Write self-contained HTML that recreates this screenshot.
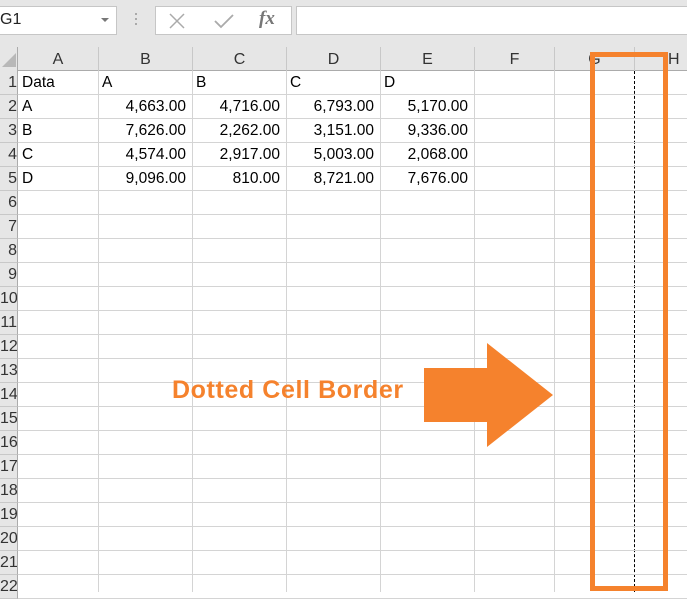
<!DOCTYPE html>
<html><head><meta charset="utf-8"><style>
*{margin:0;padding:0;box-sizing:border-box}
body{width:687px;height:592px;overflow:hidden;background:#fff;font-family:"Liberation Sans",Arial,sans-serif;position:relative}
.tb{position:absolute;left:0;top:0;width:687px;height:47px;background:#e6e6e6}
.box{position:absolute;background:#fff;border:1px solid #c6c6c6}
.hdr{position:absolute;top:47px;height:24px;background:#e6e6e6;border-bottom:1px solid #ababab}
.ch{position:absolute;top:47px;height:24px;font-size:16px;color:#333;text-align:center;line-height:26px;border-right:1px solid #c8c8c8}
.rh{position:absolute;left:0;width:18px;background:#e6e6e6;border-right:1px solid #ababab;font-size:16px;color:#333;text-align:right;line-height:24px;height:24px;overflow:hidden;border-bottom:1px solid #c8c8c8}
.vl{position:absolute;top:71px;height:521px;width:1px;background:#d4d4d4}
.hl{position:absolute;left:18px;width:669px;height:1px;background:#d4d4d4}
.c{position:absolute;font-size:15.5px;color:#000;line-height:24px;height:24px}
.r{text-align:right}
</style></head><body>
<div class="tb"></div>
<div class="box" style="left:-2px;top:6px;width:119px;height:29px"></div>
<div style="position:absolute;left:0;top:11px;font-size:16px;color:#222">G1</div>
<div style="position:absolute;left:101px;top:18px;width:0;height:0;border-left:4px solid transparent;border-right:4px solid transparent;border-top:4px solid #777"></div>
<div style="position:absolute;left:135px;top:13px;width:2px;height:2px;background:#aaa;box-shadow:0 5px 0 #aaa,0 10px 0 #aaa"></div>
<div class="box" style="left:155px;top:6px;width:137px;height:29px"></div>
<svg style="position:absolute;left:168px;top:12px" width="18" height="18"><path d="M2 2L16 16M16 2L2 16" stroke="#aaa" stroke-width="1.5"/></svg>
<svg style="position:absolute;left:213px;top:12px" width="22" height="18"><path d="M2 9L8 15L20 3" stroke="#aaa" stroke-width="1.8" fill="none"/></svg>
<div style="position:absolute;left:259px;top:8px;font-family:'Liberation Serif',serif;font-style:italic;font-weight:bold;font-size:19px;color:#777">fx</div>
<div class="box" style="left:296px;top:6px;width:395px;height:29px"></div>

<div class="hdr" style="left:0;width:687px"></div>
<div style="position:absolute;left:0;top:47px;width:18px;height:24px;background:#e6e6e6;border-right:1px solid #ababab"></div>
<svg style="position:absolute;left:2px;top:53px" width="14" height="14"><path d="M14 0L14 14L0 14Z" fill="#b8b8b8"/></svg>
<div class="ch" style="left:18px;width:81px">A</div>
<div class="ch" style="left:99px;width:94px">B</div>
<div class="ch" style="left:193px;width:94px">C</div>
<div class="ch" style="left:287px;width:94px">D</div>
<div class="ch" style="left:381px;width:94px">E</div>
<div class="ch" style="left:475px;width:80px">F</div>
<div class="ch" style="left:555px;width:80px">G</div>
<div class="ch" style="left:635px;width:80px;text-align:left;padding-left:33px">H</div>

<div class="vl" style="left:98px"></div><div class="vl" style="left:192px"></div><div class="vl" style="left:286px"></div><div class="vl" style="left:380px"></div><div class="vl" style="left:474px"></div><div class="vl" style="left:554px"></div>
<div style="position:absolute;left:634px;top:71px;height:521px;border-left:1px dashed #000"></div>

<div id="rows"></div>
<script>
var h='';for(var i=1;i<=22;i++){var t=71+(i-1)*24;h+='<div class="rh" style="top:'+t+'px">'+i+'</div><div class="hl" style="top:'+(t+23)+'px"></div>';}
document.getElementById('rows').innerHTML=h;
</script>

<div class="c" style="left:22px;top:71px">Data</div>
<div class="c" style="left:102px;top:71px">A</div>
<div class="c" style="left:196px;top:71px">B</div>
<div class="c" style="left:290px;top:71px">C</div>
<div class="c" style="left:384px;top:71px">D</div>
<div class="c" style="left:22px;top:95px">A</div>
<div class="c" style="left:22px;top:119px">B</div>
<div class="c" style="left:22px;top:143px">C</div>
<div class="c" style="left:22px;top:167px">D</div>
<div class="c r" style="left:98px;width:88px;top:95px">4,663.00</div>
<div class="c r" style="left:192px;width:88px;top:95px">4,716.00</div>
<div class="c r" style="left:286px;width:88px;top:95px">6,793.00</div>
<div class="c r" style="left:380px;width:88px;top:95px">5,170.00</div>
<div class="c r" style="left:98px;width:88px;top:119px">7,626.00</div>
<div class="c r" style="left:192px;width:88px;top:119px">2,262.00</div>
<div class="c r" style="left:286px;width:88px;top:119px">3,151.00</div>
<div class="c r" style="left:380px;width:88px;top:119px">9,336.00</div>
<div class="c r" style="left:98px;width:88px;top:143px">4,574.00</div>
<div class="c r" style="left:192px;width:88px;top:143px">2,917.00</div>
<div class="c r" style="left:286px;width:88px;top:143px">5,003.00</div>
<div class="c r" style="left:380px;width:88px;top:143px">2,068.00</div>
<div class="c r" style="left:98px;width:88px;top:167px">9,096.00</div>
<div class="c r" style="left:192px;width:88px;top:167px">810.00</div>
<div class="c r" style="left:286px;width:88px;top:167px">8,721.00</div>
<div class="c r" style="left:380px;width:88px;top:167px">7,676.00</div>

<div style="position:absolute;left:590px;top:52px;width:78px;height:539px;border:5px solid #f5822d"></div>
<svg style="position:absolute;left:0;top:0" width="687" height="592"><path d="M424 368H487V343L553 395L487 447V422H424Z" fill="#f5822d"/></svg>
<div style="position:absolute;left:172px;top:376px;font-size:25px;font-weight:bold;color:#f5822d;white-space:nowrap;letter-spacing:0.6px">Dotted Cell Border</div>
</body></html>
